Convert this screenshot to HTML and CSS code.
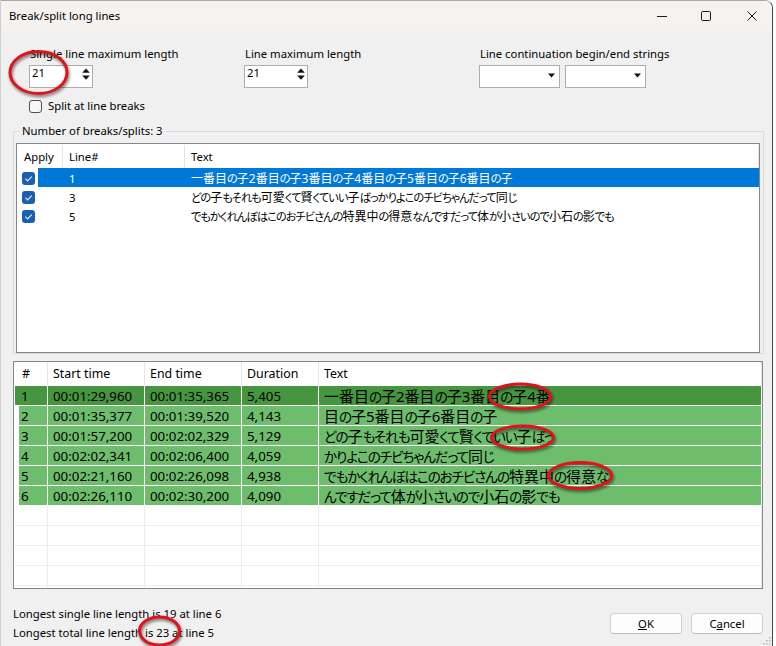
FILE: index.html
```html
<!DOCTYPE html>
<html lang="en">
<head>
<meta charset="utf-8">
<title>Break/split long lines</title>
<link rel="stylesheet" href="styles.css">
</head>
<body>
<div class="window">
  <div class="titlebar">
    <span class="title">Break/split long lines</span>
    <div class="caption">
      <svg class="cap-min" width="10" height="10" viewBox="0 0 10 10"><path d="M0 5.5H10" stroke="#1a1a1a" stroke-width="1"/></svg>
      <svg class="cap-max" width="10" height="10" viewBox="0 0 10 10"><rect x="0.5" y="0.5" width="9" height="9" rx="1.2" fill="none" stroke="#1a1a1a" stroke-width="1"/></svg>
      <svg class="cap-close" width="10" height="10" viewBox="0 0 10 10"><path d="M0.5 0.5L9.5 9.5M9.5 0.5L0.5 9.5" stroke="#1a1a1a" stroke-width="1"/></svg>
    </div>
  </div>

  <div class="content">
    <div class="options">
      <div class="field">
        <label class="flabel">Single line maximum length</label>
        <div class="spin">
          <span class="spin-val">21</span>
          <svg class="spin-arrows" width="8" height="13" viewBox="0 0 8 13"><polygon points="0.2,4.7 7.8,4.7 4,0.4" fill="#111"/><polygon points="0.2,7.4 7.8,7.4 4,11.8" fill="#111"/></svg>
        </div>
      </div>
      <div class="field">
        <label class="flabel">Line maximum length</label>
        <div class="spin">
          <span class="spin-val">21</span>
          <svg class="spin-arrows" width="8" height="13" viewBox="0 0 8 13"><polygon points="0.2,4.7 7.8,4.7 4,0.4" fill="#111"/><polygon points="0.2,7.4 7.8,7.4 4,11.8" fill="#111"/></svg>
        </div>
      </div>
      <div class="field">
        <label class="flabel">Line continuation begin/end strings</label>
        <div class="combos">
          <div class="combo"><svg width="7" height="5" viewBox="0 0 7 5"><polygon points="0,0.5 7,0.5 3.5,4.5" fill="#111"/></svg></div>
          <div class="combo"><svg width="7" height="5" viewBox="0 0 7 5"><polygon points="0,0.5 7,0.5 3.5,4.5" fill="#111"/></svg></div>
        </div>
      </div>
    </div>

    <div class="check-row">
      <span class="cb"></span>
      <span>Split at line breaks</span>
    </div>

    <fieldset class="group">
      <legend>Number of breaks/splits: 3</legend>
      <div class="list">
        <div class="lhead">
          <div class="lh-apply">Apply</div>
          <div class="lh-line">Line#</div>
          <div class="lh-text">Text</div>
        </div>
        <div class="lrow">
          <span class="lchk"><svg width="13" height="13" viewBox="0 0 13 13"><path d="M3.4 6.7L5.6 8.9L9.7 4.6" fill="none" stroke="#e6eef8" stroke-width="1.1"/></svg></span>
          <div class="lsel selected"><span class="lnum">1</span><span class="ltxt">一番目<span class="k">の</span>子2番目<span class="k">の</span>子3番目<span class="k">の</span>子4番目<span class="k">の</span>子5番目<span class="k">の</span>子6番目<span class="k">の</span>子</span></div>
        </div>
        <div class="lrow">
          <span class="lchk"><svg width="13" height="13" viewBox="0 0 13 13"><path d="M3.4 6.7L5.6 8.9L9.7 4.6" fill="none" stroke="#e6eef8" stroke-width="1.1"/></svg></span>
          <div class="lsel"><span class="lnum">3</span><span class="ltxt"><span class="k">どの</span>子<span class="k">もそれも</span>可愛<span class="k">くて</span>賢<span class="k">くていい</span>子<span class="k">ばっかりよこのチビちゃんだって</span>同<span class="k">じ</span></span></div>
        </div>
        <div class="lrow">
          <span class="lchk"><svg width="13" height="13" viewBox="0 0 13 13"><path d="M3.4 6.7L5.6 8.9L9.7 4.6" fill="none" stroke="#e6eef8" stroke-width="1.1"/></svg></span>
          <div class="lsel"><span class="lnum">5</span><span class="ltxt"><span class="k">でもかくれんぼはこのおチビさんの</span>特異中<span class="k">の</span>得意<span class="k">なんですだって</span>体<span class="k">が</span>小<span class="k">さいので</span>小石<span class="k">の</span>影<span class="k">でも</span></span></div>
        </div>
      </div>
    </fieldset>

    <div class="grid">
      <div class="grow ghead">
        <div class="c0">#</div><div>Start time</div><div>End time</div><div>Duration</div><div>Text</div>
      </div>
      <div class="grow data current">
        <div class="c0">1</div><div>00:01:29,960</div><div>00:01:35,365</div><div>5,405</div><div class="jt">一番目<span class="k">の</span>子2番目<span class="k">の</span>子3番目<span class="k">の</span>子4番</div>
      </div>
      <div class="grow data">
        <div class="c0">2</div><div>00:01:35,377</div><div>00:01:39,520</div><div>4,143</div><div class="jt">目<span class="k">の</span>子5番目<span class="k">の</span>子6番目<span class="k">の</span>子</div>
      </div>
      <div class="grow data">
        <div class="c0">3</div><div>00:01:57,200</div><div>00:02:02,329</div><div>5,129</div><div class="jt"><span class="k">どの</span>子<span class="k">もそれも</span>可愛<span class="k">くて</span>賢<span class="k">くていい</span>子<span class="k">ばっ</span></div>
      </div>
      <div class="grow data">
        <div class="c0">4</div><div>00:02:02,341</div><div>00:02:06,400</div><div>4,059</div><div class="jt"><span class="k">かりよこのチビちゃんだって</span>同<span class="k">じ</span></div>
      </div>
      <div class="grow data">
        <div class="c0">5</div><div>00:02:21,160</div><div>00:02:26,098</div><div>4,938</div><div class="jt"><span class="k">でもかくれんぼはこのおチビさんの</span>特異中<span class="k">の</span>得意<span class="k">な</span></div>
      </div>
      <div class="grow data">
        <div class="c0">6</div><div>00:02:26,110</div><div>00:02:30,200</div><div>4,090</div><div class="jt"><span class="k">んですだって</span>体<span class="k">が</span>小<span class="k">さいので</span>小石<span class="k">の</span>影<span class="k">でも</span></div>
      </div>
      <div class="grow empty"><div class="c0"></div><div></div><div></div><div></div><div></div></div>
      <div class="grow empty"><div class="c0"></div><div></div><div></div><div></div><div></div></div>
      <div class="grow empty"><div class="c0"></div><div></div><div></div><div></div><div></div></div>
      <div class="grow empty"><div class="c0"></div><div></div><div></div><div></div><div></div></div>
      <div class="grow empty"><div class="c0"></div><div></div><div></div><div></div><div></div></div>
    </div>

    <div class="footer">
      <div class="stats">
        <div>Longest single line length is 19 at line 6</div>
        <div>Longest total line length is 23 at line 5</div>
      </div>
      <div class="buttons">
        <button class="btn"><u>O</u>K</button>
        <button class="btn">C<u>a</u>ncel</button>
      </div>
    </div>
  </div>

  <svg class="grip" width="8" height="8" viewBox="0 0 8 8"><g fill="#b5b5b5"><rect x="6" y="0" width="1.5" height="1.5"/><rect x="3" y="3" width="1.5" height="1.5"/><rect x="6" y="3" width="1.5" height="1.5"/><rect x="0" y="6" width="1.5" height="1.5"/><rect x="3" y="6" width="1.5" height="1.5"/><rect x="6" y="6" width="1.5" height="1.5"/></g></svg>
</div>

<svg class="annot" width="776" height="646" viewBox="0 0 776 646">
  <g fill="none" stroke="#e3121a" stroke-width="3">
    <ellipse cx="38.5" cy="72.5" rx="28.5" ry="21"/>
    <ellipse cx="520" cy="396.5" rx="30.5" ry="12.5"/>
    <ellipse cx="522.5" cy="437.5" rx="31" ry="11.5"/>
    <ellipse cx="580" cy="475.5" rx="31.5" ry="13"/>
    <ellipse cx="159.5" cy="631" rx="20" ry="14"/>
  </g>
</svg>
</body>
</html>
```

FILE: styles.css
```css
* { box-sizing: border-box; }

html, body {
  margin: 0;
  padding: 0;
}

body {
  width: 776px;
  height: 646px;
  overflow: hidden;
  background: #ffffff;
  font-family: "Noto Sans", "Noto Sans CJK JP", sans-serif;
  font-size: 11.3px;
  color: #000;
}

.window {
  position: relative;
  width: 773px;
  height: 646px;
  background: #f0f0f0;
  border-top: 1px solid #a9a9a9;
  border-left: 1px solid #cfcfcf;
  border-right: 1px solid #474747;
  border-top-right-radius: 8px;
  display: flex;
  flex-direction: column;
}

/* ---------- title bar ---------- */
.titlebar {
  flex-shrink: 0;
  height: 30px;
  background: #f6f2f0;
  border-top-right-radius: 7px;
  display: flex;
  align-items: center;
  padding: 0 15px 1px 8px;
}

.title {
  line-height: 16px;
}

.caption {
  margin-left: auto;
  display: flex;
  align-items: center;
}

.cap-max { margin-left: 34px; }
.cap-close { margin-left: 36px; }

/* ---------- options ---------- */
.content {
  flex: 1;
  display: flex;
  flex-direction: column;
}

.options {
  display: grid;
  grid-template-columns: 215px 235px auto;
  padding: 15px 0 0 28px;
}

.flabel {
  display: block;
  height: 16px;
  line-height: 16px;
  padding-left: 1px;
  white-space: nowrap;
}

.spin {
  margin-top: 3px;
  width: 64px;
  height: 23px;
  background: #fff;
  border: 1px solid #adadad;
  display: flex;
  align-items: flex-start;
  padding-left: 2px;
}

.spin-val {
  line-height: 14px;
}

.spin-arrows {
  margin: 2px 2px 0 auto;
}

.combos {
  margin-top: 3px;
  display: flex;
  gap: 5px;
}

.combo {
  width: 81px;
  height: 23px;
  background: #fff;
  border: 1px solid #adadad;
  display: flex;
  align-items: center;
  justify-content: flex-end;
  padding: 0 4px 2px 0;
}

.check-row {
  display: flex;
  align-items: center;
  height: 16px;
  margin: 10px 0 0 28px;
  line-height: 16px;
}

.cb {
  width: 13px;
  height: 13px;
  border: 1px solid #4f4f4f;
  border-radius: 3px;
  background: #f7f7f7;
  margin-right: 6px;
}

/* ---------- group / upper list ---------- */
.group {
  margin: 9px 0 0 12px;
  width: 751px;
  min-width: 0;
  border: 1px solid #dadada;
  padding: 4px 3px 0 2px;
}

.group legend {
  margin-left: 3px;
  padding: 0 3px;
  line-height: 16px;
}

.list {
  height: 210px;
  background: #fff;
  border: 1px solid #828790;
  overflow: hidden;
}

.lhead {
  display: flex;
  height: 24px;
}

.lhead > div {
  border-right: 1px solid #e5e5e5;
  margin-top: 1px;
  height: 23px;
  line-height: 23px;
}

.lh-apply { width: 46px; padding-left: 7px; }
.lh-line { width: 122px; padding-left: 6px; }
.lh-text { width: 574px; padding-left: 6px; }

.lrow {
  display: flex;
  height: 19px;
  align-items: center;
}

.lchk {
  width: 13px;
  height: 13px;
  margin: 1px 0 0 5px;
  border-radius: 3px;
  background: #1a5fb4;
  display: flex;
}

.lsel {
  flex: 1;
  display: flex;
  height: 19px;
  margin-left: 3px;
  padding-top: 1px;
  line-height: 19px;
  white-space: nowrap;
}

.lsel.selected {
  background: #0078d7;
  color: #fff;
}

.lnum {
  width: 153px;
  padding-left: 31px;
}

.ltxt {
  font-size: 12px;
}

.ltxt .k {
  font-size: 11.2px;
  letter-spacing: -0.95px;
  font-feature-settings: "palt";
}

/* ---------- lower grid ---------- */
.grid {
  margin: 7px 0 0 12px;
  width: 750px;
  height: 228px;
  background: #fff;
  border: 1px solid #828790;
  overflow: hidden;
  font-size: 12.4px;
}

.grow {
  display: grid;
  grid-template-columns: 34px 97px 97px 77px 443px;
  height: 20px;
}

.grow > div {
  padding-left: 5px;
  white-space: nowrap;
  overflow: hidden;
}

.ghead {
  height: 24px;
}

.ghead > div {
  border-right: 1px solid #e5e5e5;
  line-height: 24px;
}

.ghead > .c0 {
  padding-left: 8px;
}

.data > div {
  background: #6dbd6d;
  border-right: 1px solid #fff;
  border-bottom: 1px solid #fff;
  font-size: 13.3px;
  line-height: 21px;
}

.data.current > div {
  background: #46963f;
}

.data > .c0 {
  border-left: 5px solid #fff;
  padding-left: 2px;
}

.data.current > .c0 {
  border-left-width: 1px;
  padding-left: 6px;
}

.data > .jt {
  font-size: 15px;
  line-height: 20px;
}

.jt .k {
  font-size: 13.6px;
  letter-spacing: -1.1px;
  font-feature-settings: "palt";
}

.empty > div {
  border-right: 1px solid #ececec;
  border-bottom: 1px solid #ececec;
}

.empty > .c0 {
  border-left: 1px solid #fff;
}

/* ---------- footer ---------- */
.footer {
  display: flex;
  justify-content: space-between;
  align-items: flex-start;
  padding: 15px 9px 0 12px;
}

.stats > div {
  line-height: 19px;
  white-space: nowrap;
}

.buttons {
  display: flex;
  gap: 9px;
  margin-top: 9px;
}

.btn {
  width: 72px;
  height: 21px;
  padding: 0;
  font: inherit;
  color: #000;
  line-height: 19px;
  text-align: center;
  background: #fdfdfd;
  border: 1px solid #d0d0d0;
  border-bottom-color: #bdbdbd;
  border-radius: 4px;
}

.grip {
  position: absolute;
  right: 1px;
  bottom: 1px;
}

/* ---------- annotation overlay ---------- */
.annot {
  position: absolute;
  left: 0;
  top: 0;
  pointer-events: none;
  filter: drop-shadow(1.5px 2px 1.5px rgba(0, 0, 0, 0.55));
}
```
